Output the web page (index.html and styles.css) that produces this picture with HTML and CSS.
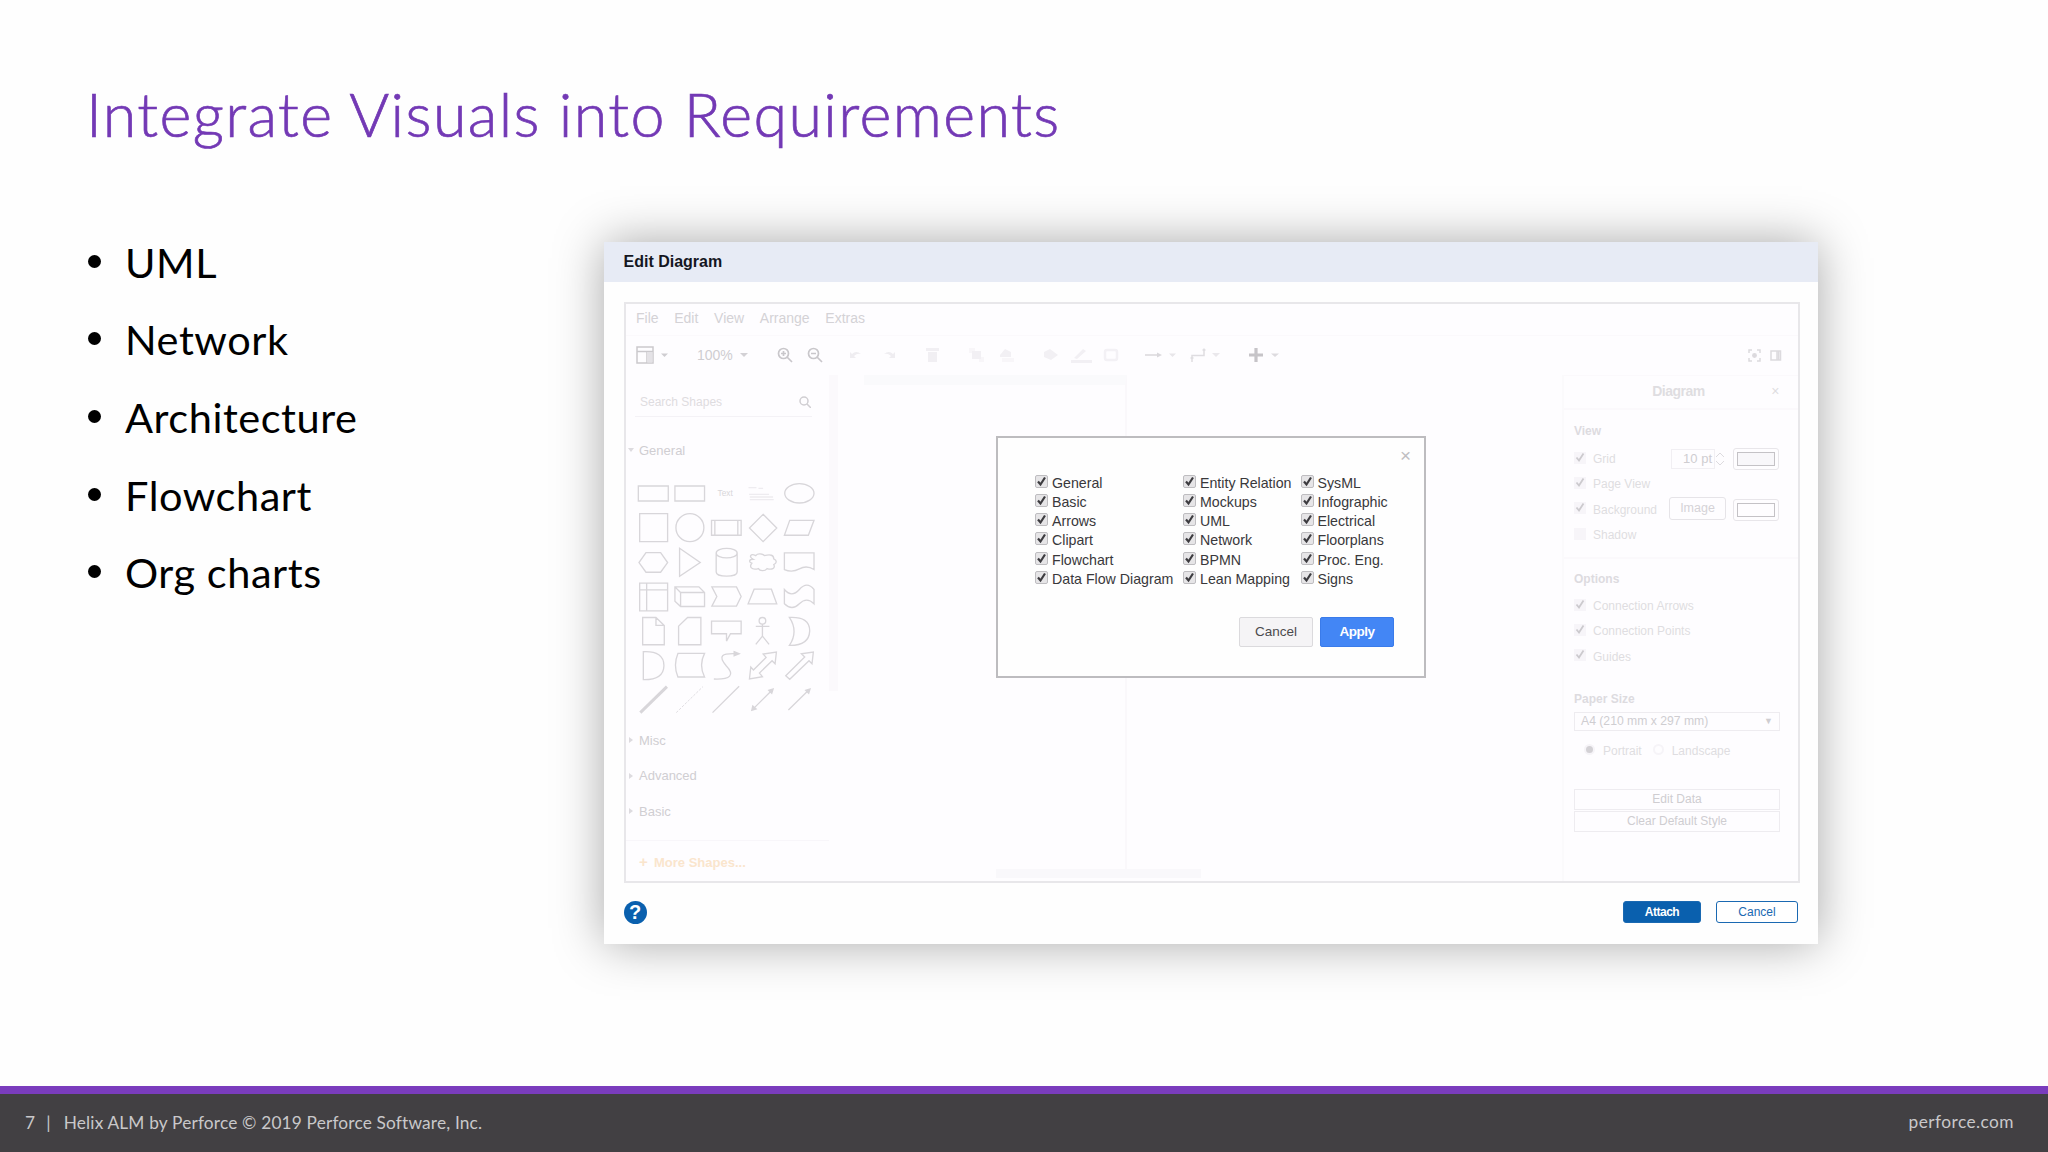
FILE: index.html
```html
<!DOCTYPE html>
<html lang="en">
<head>
  <meta charset="UTF-8">
  <meta name="viewport" content="width=device-width, initial-scale=1.0">
  <title>Integrate Visuals into Requirements</title>
  <link rel="stylesheet" href="styles.css">
</head>
<body>

  <h1 class="title">Integrate Visuals into Requirements</h1>

  <main class="content">
    <ul class="topics">
      <li>UML</li>
      <li>Network</li>
      <li>Architecture</li>
      <li>Flowchart</li>
      <li>Org charts</li>
    </ul>

    <section class="window">
      <header class="window-title">Edit Diagram</header>

      <div class="editor">
        <nav class="menubar">
          <span>File</span><span>Edit</span><span>View</span><span>Arrange</span><span>Extras</span>
        </nav>

        <div class="toolbar">
          <svg class="t-layout" width="33" height="18" viewBox="0 0 33 18"><path d="M1 1h16v16H1zM1 5.500h16M11 5.500V17" fill="none" stroke="#cbc9cd" stroke-width="1.500"/><path d="M11 6h5.500v10.500H11z" fill="#e4e2e6"/><path d="M25 7.500h7l-3.500 3.500z" fill="#cfcdd1"/></svg>
          <span class="t-zoom">100%</span>
          <svg class="t-caret" width="8" height="4" viewBox="0 0 8 4"><path d="M0 0h8L4 4z" fill="#d3d1d5"/></svg>
          <svg class="t-zoomin" width="16" height="16" viewBox="0 0 16 16" fill="none" stroke="#c9c7cb" stroke-width="1.700"><circle cx="6.500" cy="6.500" r="5"/><path d="M10 10l5 5M4 6.500h5M6.500 4v5"/></svg>
          <svg class="t-zoomout" width="16" height="16" viewBox="0 0 16 16" fill="none" stroke="#c9c7cb" stroke-width="1.700"><circle cx="6.500" cy="6.500" r="5"/><path d="M10 10l5 5M4 6.500h5"/></svg>
          <svg class="t-undo" width="46" height="10" viewBox="0 0 46 10" fill="#efedf1"><path d="M0 2v6h6L4 6q3-3 7-2Q6 0 2 4z"/><path d="M45 2v6h-6l2-2q-3-3-7-2 5-4 9 0z"/></svg>
          <svg class="t-delete" width="13" height="16" viewBox="0 0 13 16" fill="#f1eff3"><path d="M0 1h13v3H0zM2 5h9v10H2z"/></svg>
          <svg class="t-order" width="46" height="16" viewBox="0 0 46 16" fill="#f2f0f4"><path d="M3 4h9v8H3z"/><path d="M0 1h6v5H0zM10 10h5v5h-5z" opacity=".5"/><path d="M31 8l5-6 6 3v5H31z"/><path d="M33 11h12v4H33z" opacity=".5"/></svg>
          <svg class="t-style" width="78" height="18" viewBox="0 0 78 18" fill="#f2f0f4"><path d="M2 6l6-3 8 6-7 5-7-3z"/><path d="M32 12l9-9 3 2-9 8zM29 14h21v3H29z"/><rect x="63" y="4" width="12" height="10" rx="2" fill="none" stroke="#f3f1f5" stroke-width="2.500"/></svg>
          <svg class="t-line" width="31" height="8" viewBox="0 0 31 8" fill="#dad8dc"><path d="M0 3.300h12V1.500L17 4l-5 2.500V4.700H0z"/><path d="M24 2.500h7L27.500 6z" fill="#e8e6ea"/></svg>
          <svg class="t-connector" width="31" height="16" viewBox="0 0 31 16"><path d="M2 15V8.500h12V1.500M.500 11h3M12.500 3h3" fill="none" stroke="#dfdde1" stroke-width="1.500"/><path d="M22 6h8l-4 4z" fill="#eae8ec"/></svg>
          <svg class="t-add" width="31" height="14" viewBox="0 0 31 14"><path d="M7 0v14M0 7h14" stroke="#c6c4c8" stroke-width="3.200"/><path d="M22 5.500h8L26 9z" fill="#dddbdf"/></svg>
          <svg class="t-view" width="34" height="13" viewBox="0 0 34 13" fill="none" stroke="#dcdade" stroke-width="1.500"><path d="M1 4V1h3M9 1h3v3M12 9v3H9M4 12H1V9"/><circle cx="6.500" cy="6.500" r="1.700" fill="#dcdade"/><path d="M23 2h9.500v9H23zM29 2v9"/><path d="M30.500 2v9" stroke-width="2"/></svg>
        </div>

        <div class="workspace">
          <aside class="shapes">
            <div class="search">
              <span>Search Shapes</span>
              <svg width="12" height="12" viewBox="0 0 12 12" fill="none" stroke="#d0ced2" stroke-width="1.500"><circle cx="5" cy="5" r="4"/><path d="M8 8l4 4"/></svg>
            </div>
            <div class="category open">General</div>

            <svg class="palette" width="183" height="237" viewBox="75 145 550 710">
              <path d="M85 165h90v45H85zM195 165h89v45h-89z"/>
              <ellipse cx="569" cy="187" rx="44" ry="29"/>
              <text x="323" y="194" class="palette-text">Text</text>
              <path class="palette-copy" d="M416 170h24M446 172h14M418 190h60M420 198h70M420 206h72"/>

              <path d="M89 248h84v84H89zM305 268h89v45h-89zM315 268v45M384 268v45M460 250l41 41-41 41-41-41zM540 268h73l-17 45h-72z"/>
              <circle cx="240" cy="290" r="42"/>

              <path d="M108 365h44l21 30-21 29h-44l-21-29zM209 352l62 43-62 41z"/>
              <path d="M319 366c0-18 63-18 63 0v57c0 17-63 17-63 0zM319 366c0 20 63 20 63 0"/>
              <path d="M438 374c6-8 20-5 26 0 18-4 28-2 28 10 10 5 10 12 0 17 6 12-6 16-20 12-8 10-22 7-26 0-22 6-28-6-20-16-10-4-8-12 4-12-14-8-8-18 8-11zM524 366h89v50q-22-14-44-2t-45 2z"/>

              <path d="M89 457h84v83H89zM110 457v83M89 477h84M195 468h72l17 17v42h-72l-17-16zM195 468l17 17h72M212 485v42M306 468h74l14 29-14 29h-74l15-29zM433 475h52l16 44h-86z"/>
              <path d="M524 476q22 26 45 0t44 0v43q-22-22-44 0t-45 0z"/>

              <path d="M98 560h40l25 24v58H98zM138 560v24h25M206 586l27-26h40v82h-67zM305 571h89v38h-32l-12 22v-22h-45z"/>
              <circle cx="458" cy="570" r="10"/>
              <path d="M458 580v36M438 587h41M458 616l-20 25M458 616l20 25M539 560q62-3 61 41-2 44-61 43 28-42 0-84z"/>

              <path d="M100 663q62-3 62 42-1 43-62 42zM204 668h80q-18 35 0 71h-80q-15-36 0-71z"/>
              <path d="M312 745c50 2 64-12 37-40-25-30-14-38 32-36"/>
              <path class="solid" d="M373 663l15 6-15 6z"/>
              <path d="M500 664l-4 35-9-9-38 37 9 11-39 7 4-36 8 9 38-38-9-10zM611 664l-4 35-9-9-58 56-12-11 57-56-10-10z"/>

              <path d="M91 846l80-78" stroke-width="9"/>
              <path d="M199 846l80-78" class="dashed"/>
              <path d="M308 846l80-79M428 837l60-60M536 838l62-61"/>
              <path class="solid" d="M426 839l3-13 10 9zM490 775l-4 13-9-9zM601 775l-4 13-9-9z"/>
            </svg>

            <div class="category first-closed">Misc</div>
            <div class="category">Advanced</div>
            <div class="category">Basic</div>
            <div class="more-shapes"><span>+</span>More Shapes...</div>
          </aside>

          <div class="splitter"></div>

          <div class="canvas">
            <div class="page"></div>
            <div class="scroll-x"></div>
          </div>

          <aside class="format">
            <div class="format-title">Diagram<span>×</span></div>

            <div class="format-group view-group">
              <h2>View</h2>
              <div class="option"><i class="check on"></i><label>Grid</label><span class="points">10 pt</span><svg class="stepper" width="8" height="14" viewBox="0 0 8 14" fill="none" stroke="#dddbdf"><path d="M0 5l4-4 4 4M0 9l4 4 4-4"/></svg><span class="swatch gray"></span></div>
              <div class="option"><i class="check on"></i><label>Page View</label></div>
              <div class="option"><i class="check on"></i><label>Background</label><span class="image-button">Image</span><span class="swatch"></span></div>
              <div class="option"><i class="check"></i><label>Shadow</label></div>
            </div>

            <div class="format-group options-group">
              <h2>Options</h2>
              <div class="option"><i class="check on"></i><label>Connection Arrows</label></div>
              <div class="option"><i class="check on"></i><label>Connection Points</label></div>
              <div class="option"><i class="check on"></i><label>Guides</label></div>
            </div>

            <div class="format-group paper-group">
              <h2>Paper Size</h2>
              <div class="select">A4 (210 mm x 297 mm)<span>▼</span></div>
              <div class="orientation"><i class="radio on"></i><label>Portrait</label><i class="radio"></i><label>Landscape</label></div>
              <div class="wide-button">Edit Data</div>
              <div class="wide-button">Clear Default Style</div>
            </div>
          </aside>
        </div>

        <div class="dialog">
          <span class="dialog-close">×</span>
          <div class="libraries">
            <div>
              <p>General</p><p>Basic</p><p>Arrows</p><p>Clipart</p><p>Flowchart</p><p>Data Flow Diagram</p>
            </div>
            <div>
              <p>Entity Relation</p><p>Mockups</p><p>UML</p><p>Network</p><p>BPMN</p><p>Lean Mapping</p>
            </div>
            <div>
              <p>SysML</p><p>Infographic</p><p>Electrical</p><p>Floorplans</p><p>Proc. Eng.</p><p>Signs</p>
            </div>
          </div>
          <div class="dialog-buttons">
            <button>Cancel</button>
            <button class="apply">Apply</button>
          </div>
        </div>
      </div>

      <footer class="window-footer">
        <span class="help">?</span>
        <button class="attach">Attach</button>
        <button>Cancel</button>
      </footer>
    </section>
  </main>

  <footer class="slide-footer">
    <span class="number">7</span>
    <span class="bar">|</span>
    <span class="copyright">Helix ALM by Perforce © 2019 Perforce Software, Inc.</span>
    <span class="site">perforce.com</span>
  </footer>

  <script>
    // every library starts out ticked
    const tick = '<svg class="tick" width="13" height="13" viewBox="0 0 13 13"><rect x=".5" y=".5" width="12" height="12" rx="1.500" fill="#e6e5e7" stroke="#bebdc0"/><path d="M3 6.500l2.500 3L10 2.500" fill="none" stroke="#3d3c40" stroke-width="2.200"/></svg>';
    document.querySelectorAll('.libraries p').forEach(p => p.insertAdjacentHTML('afterbegin', tick));

    const faintTick = '<svg width="12" height="12" viewBox="0 0 12 12"><path d="M2.500 5.500l2.500 3 4.500-7" fill="none" stroke="#cccace" stroke-width="1.800"/></svg>';
    document.querySelectorAll('.check.on').forEach(i => i.innerHTML = faintTick);
  </script>

</body>
</html>
```
FILE: styles.css
```css
*,
*::before {
  box-sizing: border-box;
}

body {
  margin: 0;
  height: 1152px;
  display: flex;
  flex-direction: column;
  background: #fefefe;
  color: #000;
  font-family: Lato, 'Open Sans', sans-serif;
  overflow: hidden;
}

svg {
  display: block;
  flex: none;
}

.title {
  height: 242px;
  margin: 0;
  padding: 77px 0 0 86px;
  font-size: 61px;
  font-weight: 300;
  letter-spacing: 1.380px;
  line-height: 74px;
  color: #7339b5;
  -webkit-text-stroke: 0.700px #7339b5;
  white-space: nowrap;
}

.content {
  flex: 1;
  display: flex;
}

.topics {
  width: 603.500px;
  margin: 0;
  padding: 0 0 0 88px;
  list-style: none;
  font-size: 41.500px;
  letter-spacing: 0.550px;
}

.topics li {
  display: flex;
  align-items: center;
  height: 77.600px;
  margin-top: 0;
  position: relative;
  top: -19px;
}

.topics li::before {
  content: '';
  width: 13px;
  height: 13px;
  margin: -1px 24px 0 0;
  border-radius: 50%;
  background: #000;
}

/* Diagram window */
.window {
  width: 1214.500px;
  height: 702px;
  background: #fefefe;
  box-shadow: 0 0 46px rgba(0, 0, 0, 0.34);
  font-family: 'Liberation Sans', Arial, sans-serif;
}

.window-title {
  height: 40px;
  padding-left: 20px;
  background: #e7ebf5;
  color: #14161f;
  font-size: 16px;
  font-weight: bold;
  line-height: 40px;
}

.editor {
  position: relative;
  display: flex;
  flex-direction: column;
  width: 1176px;
  height: 581px;
  margin: 20px 0 0 20.500px;
  border: 2px solid #e8e7ea;
  background: #fefdff;
}

.menubar {
  display: flex;
  gap: 15.700px;
  height: 31px;
  padding-left: 10px;
  color: #d4d2d6;
  font-size: 14px;
  line-height: 28px;
}

.toolbar {
  display: flex;
  align-items: center;
  height: 40px;
  padding-left: 10px;
  border-top: 1px solid #fbf9fc;
  color: #cfcdd1;
}

.t-zoom {
  width: 36px;
  margin-left: 28px;
  font-size: 14px;
}

.t-caret { margin-left: 7px; }
.t-zoomin { margin-left: 29px; }
.t-zoomout { margin-left: 14px; }
.t-undo { margin-left: 27px; }
.t-delete { margin-left: 30px; }
.t-order { margin-left: 30px; }
.t-style { margin-left: 27px; }
.t-line { margin-left: 25px; }
.t-connector { margin-left: 14px; }
.t-add { margin-left: 28px; }
.t-view { margin-left: auto; margin-right: 16px; }

.workspace {
  flex: 1;
  display: flex;
}

.shapes {
  width: 203px;
  color: #d0ced2;
  font-size: 13px;
}

.search {
  display: flex;
  align-items: center;
  justify-content: space-between;
  width: 177px;
  height: 28px;
  margin: 14px 0 20px 9px;
  padding: 0 1px 0 5px;
  border-bottom: 1px solid #f4f2f6;
  color: #dedce0;
  font-size: 12px;
}

.category {
  display: flex;
  align-items: center;
  height: 35.500px;
}

.category::before {
  content: '';
  width: 4px;
  margin: 0 6px 0 3px;
  border-left: 4px solid #dddbdf;
  border-top: 3px solid transparent;
  border-bottom: 3px solid transparent;
}

.category.open {
  height: 27px;
}

.category.open::before {
  width: 6px;
  margin: 0 5px 0 2px;
  border: 3px solid transparent;
  border-top: 4px solid #dddbdf;
  border-bottom: 0;
}

.first-closed {
  margin-top: 7px;
}

.palette {
  margin: 15px 0 0 9px;
  fill: none;
  stroke: #d8d6da;
  stroke-width: 4;
}

.palette .solid {
  fill: #d8d6da;
}

.palette .dashed {
  stroke: #e0dee2;
  stroke-width: 3;
  stroke-dasharray: 8 4;
}

.palette-text {
  fill: #d8d6da;
  stroke: none;
  font-size: 25px;
}

.palette-copy {
  stroke: #eeecf0;
}

.more-shapes {
  height: 41px;
  margin-top: 11px;
  padding-left: 13px;
  border-top: 1px solid #f8f6fa;
  color: #fae5cd;
  font-weight: bold;
  line-height: 42px;
}

.more-shapes span {
  display: inline-block;
  width: 15px;
  font-size: 15px;
}

.splitter {
  width: 9px;
  height: 316px;
  background: #fbf9fc;
}

.canvas {
  flex: 1;
  display: flex;
  flex-direction: column;
  padding-left: 26px;
}

.page {
  flex: 1;
  width: 263px;
  border-top: 10px solid #fafafc;
  border-right: 2px solid #faf8fb;
}

.scroll-x {
  width: 205px;
  height: 9px;
  margin: 0 0 3px 132px;
  background: #f9f8fb;
}

/* Format panel */
.format {
  width: 236px;
  border-left: 2px solid #fbfafc;
  color: #dfdde1;
  font-size: 12px;
}

.format-title {
  display: flex;
  justify-content: center;
  height: 35px;
  border-bottom: 2px solid #fbf9fc;
  border-top: 1px solid #fbf9fc;
  padding-right: 5px;
  font-size: 14px;
  font-weight: bold;
  letter-spacing: -0.500px;
  line-height: 31px;
  position: relative;
}

.format-title span {
  position: absolute;
  right: 19px;
  font-weight: normal;
}

.format-group {
  padding-left: 10px;
}

.format-group h2 {
  margin: 0;
  height: 16px;
  font-size: 12px;
  line-height: 16px;
  color: #dddbdf;
}

.view-group {
  height: 149px;
  padding-top: 13px;
  border-bottom: 2px solid #fbf9fc;
}

.view-group h2 {
  margin-bottom: 8px;
}

.options-group {
  padding-top: 12px;
}

.options-group h2 {
  margin-bottom: 7px;
}

.option {
  display: flex;
  align-items: center;
  height: 25.300px;
}

.option label {
  width: 78px;
}

.options-group label {
  width: auto;
}

.check {
  width: 12px;
  height: 12px;
  margin: -3px 7px 0 0;
  background: #f7f5f9;
}

.points {
  width: 44px;
  height: 20px;
  padding-right: 2px;
  border: 1px solid #f1eff3;
  color: #cfcdd1;
  font-size: 13px;
  line-height: 18px;
  text-align: right;
}

.stepper {
  margin: 0 9px 0 1px;
}

.swatch {
  width: 46px;
  height: 22px;
  padding: 0;
  border: 1px solid #e8e6ea;
  border-radius: 3px;
  display: flex;
}

.swatch::before {
  content: '';
  flex: 1;
  margin: 3px;
  border: 1px solid #c4c2c6;
}

.swatch.gray::before {
  background: #f8f7fa;
}

.image-button {
  width: 57px;
  height: 23px;
  margin: -2px 7px 0 -2px;
  border: 1px solid #e6e4e8;
  border-radius: 3px;
  color: #d5d3d7;
  font-size: 12.500px;
  line-height: 20px;
  text-align: center;
}

.paper-group {
  padding-top: 22px;
}

.paper-group h2 {
  margin-bottom: 5px;
}

.select {
  display: flex;
  justify-content: space-between;
  width: 206px;
  height: 19px;
  padding: 0 6px;
  border: 1px solid #eeecf0;
  color: #cfcdd1;
  font-size: 12.200px;
  line-height: 17px;
}

.select span {
  font-size: 9px;
}

.orientation {
  display: flex;
  align-items: center;
  height: 37px;
  margin-bottom: 21px;
  padding-left: 10px;
}

.orientation label {
  margin: 2px 11px 0 8px;
}

.radio {
  width: 11px;
  height: 11px;
  border: 2px solid #f6f4f8;
  border-radius: 50%;
}

.radio.on {
  background: #d3d1d5;
}

.wide-button {
  width: 206px;
  height: 21px;
  margin-bottom: 1px;
  border: 1px solid #eeecf0;
  color: #cfcdd1;
  line-height: 18px;
  text-align: center;
}

/* Shape library dialog, over the editor */
.dialog {
  position: absolute;
  left: 370px;
  top: 132px;
  width: 430px;
  height: 242px;
  padding: 35px 0 0 37px;
  border: 2px solid #bdbcbf;
  background: #fefefe;
  color: #39383b;
}

.dialog-close {
  position: absolute;
  top: 7px;
  right: 13px;
  color: #c0bfc2;
  font-size: 19px;
}

.libraries {
  display: flex;
  font-size: 14.200px;
}

.libraries div:nth-child(1) { width: 148px; }
.libraries div:nth-child(2) { width: 117.500px; }

.libraries p {
  display: flex;
  align-items: center;
  height: 19.270px;
  margin: 0;
  white-space: nowrap;
}

.tick {
  margin: -3px 4px 0 0;
}

.dialog-buttons {
  display: flex;
  gap: 7px;
  margin: 28px 0 0 204px;
}

button {
  padding: 0;
  font-family: inherit;
}

.dialog-buttons button {
  width: 74px;
  height: 30px;
  border: 1px solid #dbdadd;
  border-radius: 2px;
  background: #f5f4f6;
  color: #4b4a4d;
  font-size: 13.500px;
}

.dialog-buttons .apply {
  border-color: #3a7bea;
  background: #4386f5;
  color: #fff;
  font-weight: bold;
  letter-spacing: -0.500px;
}

.window-footer {
  display: flex;
  align-items: center;
  height: 58px;
  padding: 0 20px;
}

.help {
  width: 23px;
  height: 23px;
  margin-right: auto;
  border-radius: 50%;
  background: #0a60ae;
  color: #fff;
  font-size: 20px;
  font-weight: bold;
  line-height: 23px;
  text-align: center;
}

.window-footer button {
  width: 82px;
  height: 22px;
  border: 1px solid #1a69b2;
  border-radius: 3px;
  background: #fff;
  color: #1a69b2;
  font-size: 12px;
}

.window-footer .attach {
  width: 78px;
  margin-right: 15px;
  background: #0a60ae;
  color: #fff;
  font-weight: bold;
  letter-spacing: -0.500px;
}

/* Slide footer */
.slide-footer {
  display: flex;
  height: 66px;
  padding: 17px 34px 0 25px;
  border-top: 8px solid #7a3cbd;
  background: #424043;
  color: #c9c8ca;
  font-size: 17.300px;
  letter-spacing: 0.170px;
  line-height: 24px;
}

.bar {
  margin: 0 13px 0 11px;
}

.site {
  margin: -1px 0 0 auto;
  letter-spacing: 0.450px;
}
```
